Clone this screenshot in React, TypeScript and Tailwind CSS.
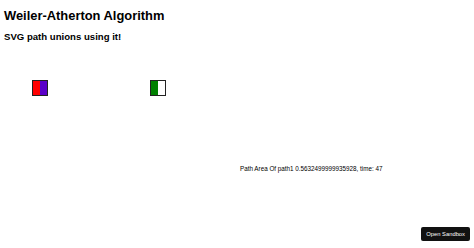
import React from "react";

export default function App() {
  return (
    <div className="relative w-[474px] h-[248px] bg-white overflow-hidden" style={{ fontFamily: '"Liberation Sans", Arial, sans-serif' }}>
      <div className="px-[4px] pt-[8px]">
        <h1 className="text-[12.9px] leading-[15px] font-bold text-black">Weiler-Atherton Algorithm</h1>
        <h2 className="mt-[7.5px] text-[9.6px] leading-[11px] font-bold text-black">SVG path unions using it!</h2>
      </div>
      <div className="flex pt-[38.5px] pl-[32px] gap-[102px]">
        <div className="flex w-[16px] h-[16px] border border-[#222]">
          <div className="flex-1 bg-[#ff0000]" />
          <div className="flex-1 bg-[#5a00c8]" />
        </div>
        <div className="flex w-[16px] h-[16px] border border-[#222]">
          <div className="flex-1 bg-[#008000]" />
          <div className="flex-1 bg-white" />
        </div>
      </div>
      <div className="pl-[240px] pt-[69px] text-[6.3px] leading-[8px] text-black">
        Path Area Of path1 0.5632499999935928, time: 47
      </div>
      <button className="absolute right-[4px] bottom-[7px] bg-[#111] text-white text-[5.8px] leading-[7px] px-[5px] py-[3.5px] rounded-[2px]">
        Open Sandbox
      </button>
    </div>
  );
}
